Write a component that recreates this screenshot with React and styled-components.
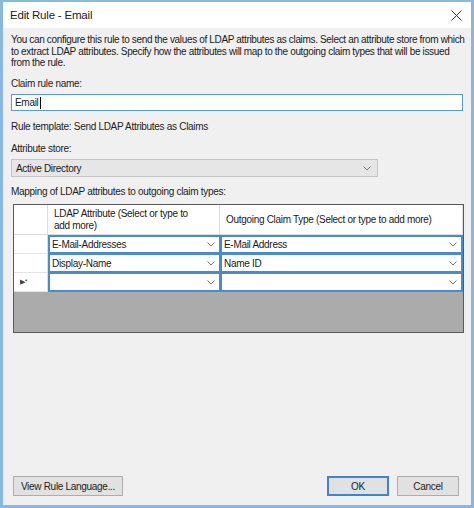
import React from "react";
import styled, { createGlobalStyle } from "styled-components";

const GlobalStyle = createGlobalStyle`
  html, body {
    margin: 0;
    padding: 0;
    background: #ffffff;
  }
  * {
    box-sizing: border-box;
  }
`;

const Window = styled.div`
  width: 474px;
  height: 508px;
  display: flex;
  flex-direction: column;
  border: 3px solid #8ab6df;
  border-top-width: 2px;
  background: #f0f0f0;
  font-family: "Liberation Sans", Arial, sans-serif;
  color: #1a1a1a;
`;

const TitleBar = styled.div`
  height: 26px;
  background: #ffffff;
  display: flex;
  align-items: center;
  justify-content: space-between;
  padding: 0 7px 0 7px;
  font-size: 11.5px;
  letter-spacing: -0.2px;
  color: #222;
`;

const CloseBtn = styled.div`
  width: 16px;
  height: 16px;
  display: flex;
  align-items: center;
  justify-content: center;
`;

const Content = styled.div`
  flex: 1;
  display: flex;
  flex-direction: column;
  padding: 6px 8px 9px 8px;
  font-size: 10px;
  letter-spacing: -0.3px;
`;

const Description = styled.p`
  margin: 0;
  line-height: 11.7px;
  white-space: nowrap;
  letter-spacing: -0.34px;
`;

const Label = styled.div`
  margin-top: ${(p) => p.$top || 0}px;
  line-height: 13px;
  color: #222;
`;

const TextInput = styled.div`
  margin-top: 4px;
  height: 17px;
  border: 1px solid #5b9bd5;
  background: #fff;
  display: flex;
  align-items: center;
  padding-left: 3px;
`;

const Caret = styled.span`
  display: inline-block;
  width: 1px;
  height: 12px;
  background: #000;
  margin-left: 1px;
`;

const SelectBox = styled.div`
  margin-top: 4px;
  width: 367px;
  height: 18px;
  border: 1px solid #c5c5c5;
  background: #e6e6e6;
  display: flex;
  align-items: center;
  justify-content: space-between;
  padding: 0 6px 0 4px;
`;

const Grid = styled.div`
  margin-top: 6px;
  margin-left: 2px;
  width: 451px;
  height: 129px;
  border: 1px solid #5a5a5a;
  background: #ababab;
  display: grid;
  grid-template-columns: 34px 172px 1fr;
  grid-template-rows: 30px 19px 19px 19px;
  align-content: start;
`;

const HeadCell = styled.div`
  background: #fff;
  border-right: 1px solid #dcdcdc;
  border-bottom: 1px solid #dcdcdc;
  display: flex;
  align-items: center;
  padding: 0 8px 0 6px;
  line-height: 11.5px;
  &:last-child {
    border-right: none;
  }
`;

const RowHead = styled.div`
  background: #fff;
  border-bottom: 1px solid #e4e4e4;
  border-right: 1px solid #dcdcdc;
  display: flex;
  align-items: center;
  padding-left: 6px;
  font-size: 7px;
  color: #444;
`;

const ComboCell = styled.div`
  background: #fff;
  border: 2px solid #4a8ccb;
  border-right-width: ${(p) => (p.$last ? 2 : 1)}px;
  margin-top: ${(p) => (p.$first ? 0 : -1)}px;
  display: flex;
  align-items: center;
  justify-content: space-between;
  padding: 0 4px 0 2px;
`;

const Spacer = styled.div`
  flex: 1;
`;

const ButtonRow = styled.div`
  display: flex;
  align-items: center;
  padding: 0 4px 0 2px;
`;

const Button = styled.div`
  height: 20px;
  width: ${(p) => p.$w}px;
  margin-left: ${(p) => p.$ml || 0}px;
  background: #e1e1e1;
  border: ${(p) => (p.$primary ? "2px solid #3b86d1" : "1px solid #adadad")};
  display: flex;
  align-items: center;
  justify-content: center;
  color: #222;
`;

const Chevron = ({ color = "#777" }) => (
  <svg width="8" height="5" viewBox="0 0 8 5">
    <polyline points="0.5,0.5 4,4 7.5,0.5" fill="none" stroke={color} strokeWidth="1" />
  </svg>
);

const rows = [
  { attr: "E-Mail-Addresses", claim: "E-Mail Address" },
  { attr: "Display-Name", claim: "Name ID" },
  { attr: "", claim: "", isNew: true },
];

const App = () => (
  <>
    <GlobalStyle />
    <Window>
      <TitleBar>
        <span>Edit Rule - Email</span>
        <CloseBtn>
          <svg width="11" height="11" viewBox="0 0 11 11">
            <path d="M0.5 0.5 L10.5 10.5 M10.5 0.5 L0.5 10.5" stroke="#333" strokeWidth="1" />
          </svg>
        </CloseBtn>
      </TitleBar>
      <Content>
        <Description>
          You can configure this rule to send the values of LDAP attributes as claims. Select an attribute store from which
          <br />
          to extract LDAP attributes. Specify how the attributes will map to the outgoing claim types that will be issued
          <br />
          from the rule.
        </Description>
        <Label $top={8}>Claim rule name:</Label>
        <TextInput>
          Email
          <Caret />
        </TextInput>
        <Label $top={9}>Rule template: Send LDAP Attributes as Claims</Label>
        <Label $top={9}>Attribute store:</Label>
        <SelectBox>
          <span>Active Directory</span>
          <Chevron />
        </SelectBox>
        <Label $top={8}>Mapping of LDAP attributes to outgoing claim types:</Label>
        <Grid>
          <HeadCell />
          <HeadCell>
            LDAP Attribute (Select or type to
            <br />
            add more)
          </HeadCell>
          <HeadCell>Outgoing Claim Type (Select or type to add more)</HeadCell>
          {rows.map((r, i) => (
            <React.Fragment key={i}>
              <RowHead>{r.isNew ? "▶*" : ""}</RowHead>
              <ComboCell $first={i === 0}>
                <span>{r.attr}</span>
                <Chevron />
              </ComboCell>
              <ComboCell $first={i === 0} $last>
                <span>{r.claim}</span>
                <Chevron />
              </ComboCell>
            </React.Fragment>
          ))}
        </Grid>
        <Spacer />
        <ButtonRow>
          <Button $w={110}>View Rule Language...</Button>
          <Spacer />
          <Button $w={62} $primary>OK</Button>
          <Button $w={62} $ml={8}>Cancel</Button>
        </ButtonRow>
      </Content>
    </Window>
  </>
);

export default App;
